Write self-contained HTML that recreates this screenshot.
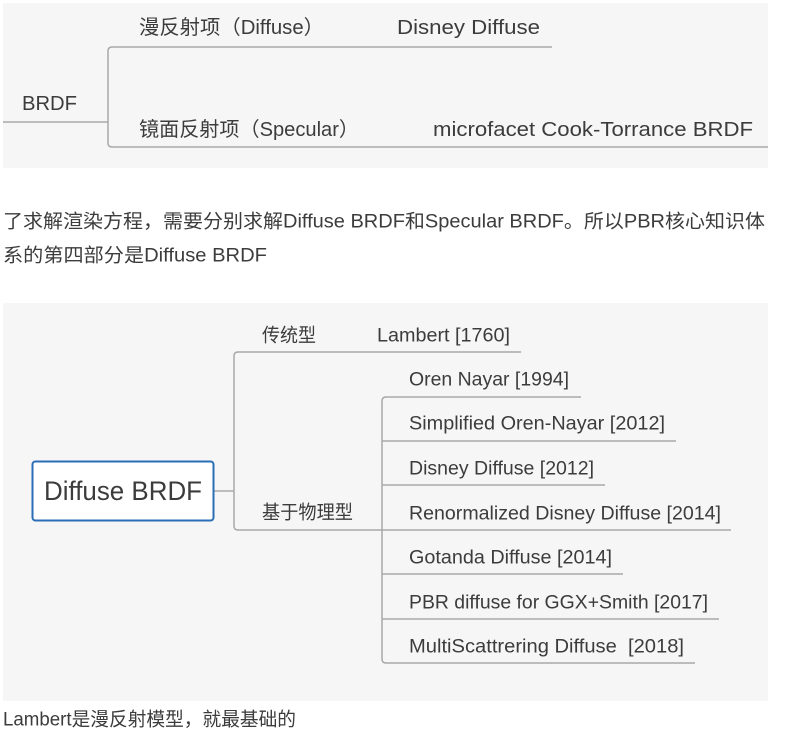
<!DOCTYPE html>
<html><head><meta charset="utf-8"><style>
html,body{margin:0;padding:0;background:#fff;width:796px;height:731px;overflow:hidden}
svg{display:block}
text{font-family:"Liberation Sans","Noto Sans CJK SC",sans-serif;fill:#3c3c3c;dominant-baseline:central}
</style></head><body>
<svg width="796" height="731" viewBox="0 0 796 731">
<rect x="3" y="3" width="765" height="165" fill="#f6f6f6"/>
<g stroke="#a8a8a8" stroke-width="1.5" fill="none">
<path d="M3 122H108"/>
<path d="M552 47H112Q108 47 108 51V143Q108 147 112 147H768"/>
</g>
<g font-size="20">
<text x="139" y="28" textLength="185" lengthAdjust="spacingAndGlyphs">漫反射项（Diffuse）</text>
<text x="397" y="28" textLength="143" lengthAdjust="spacingAndGlyphs">Disney Diffuse</text>
<text x="22" y="104" textLength="55" lengthAdjust="spacingAndGlyphs">BRDF</text>
<text x="139" y="130" textLength="220" lengthAdjust="spacingAndGlyphs">镜面反射项（Specular）</text>
<text x="433" y="130" textLength="320" lengthAdjust="spacingAndGlyphs">microfacet Cook-Torrance BRDF</text>
</g>
<g font-size="19">
<text x="3" y="222" textLength="762" lengthAdjust="spacingAndGlyphs">了求解渲染方程，需要分别求解Diffuse BRDF和Specular BRDF。所以PBR核心知识体</text>
<text x="3" y="256" textLength="264" lengthAdjust="spacingAndGlyphs">系的第四部分是Diffuse BRDF</text>
<text x="3" y="720" textLength="293" lengthAdjust="spacingAndGlyphs">Lambert是漫反射模型，就最基础的</text>
</g>
<rect x="3" y="303" width="765" height="398" fill="#f6f6f6"/>
<g stroke="#a8a8a8" stroke-width="1.5" fill="none">
<path d="M214 491H234"/>
<path d="M521 352H238Q234 352 234 356V526Q234 530 238 530H382"/>
<path d="M581 397H386Q382 397 382 401V659Q382 663 386 663H695"/>
<path d="M382 441H676M382 485H605M382 530H731M382 574H623M382 619H719"/>
</g>
<rect x="32.5" y="461.5" width="181" height="59" rx="3" fill="#fff" stroke="#2a6eb5" stroke-width="2"/>
<text x="44" y="491" font-size="27" textLength="158" lengthAdjust="spacingAndGlyphs">Diffuse BRDF</text>
<g font-size="19">
<text x="262" y="336" textLength="54" lengthAdjust="spacingAndGlyphs">传统型</text>
<text x="262" y="513" textLength="91" lengthAdjust="spacingAndGlyphs">基于物理型</text>
<text x="377" y="336" textLength="133" lengthAdjust="spacingAndGlyphs">Lambert [1760]</text>
<text x="409" y="380" textLength="160" lengthAdjust="spacingAndGlyphs">Oren Nayar [1994]</text>
<text x="409" y="424" textLength="256" lengthAdjust="spacingAndGlyphs">Simplified Oren-Nayar [2012]</text>
<text x="409" y="469" textLength="185" lengthAdjust="spacingAndGlyphs">Disney Diffuse [2012]</text>
<text x="409" y="514" textLength="312" lengthAdjust="spacingAndGlyphs">Renormalized Disney Diffuse [2014]</text>
<text x="409" y="558" textLength="203" lengthAdjust="spacingAndGlyphs">Gotanda Diffuse [2014]</text>
<text x="409" y="603" textLength="299" lengthAdjust="spacingAndGlyphs">PBR diffuse for GGX+Smith [2017]</text>
<text x="409" y="647" textLength="275" lengthAdjust="spacingAndGlyphs" xml:space="preserve">MultiScattrering Diffuse  [2018]</text>
</g>
</svg>
</body></html>
